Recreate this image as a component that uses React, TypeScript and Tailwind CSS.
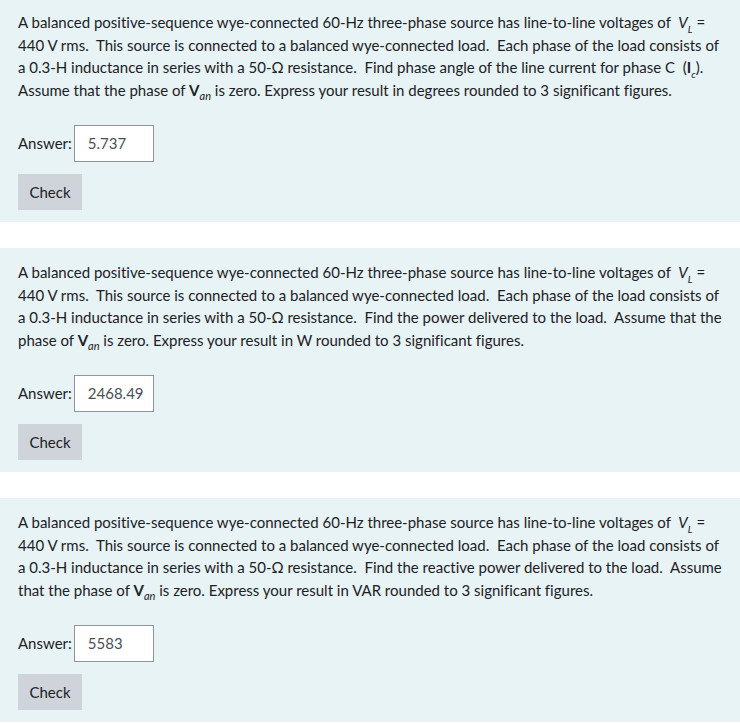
import React from 'react';

const Vl = () => (
  <span className="italic">
    V<sub className="text-[10px] leading-none align-[-2px]">L</sub>
  </span>
);

const Van = () => (
  <span>
    <b className="font-bold">V</b>
    <sub className="italic text-[11px] leading-none align-[-2px]">an</sub>
  </span>
);

const Ic = () => (
  <span>
    <b className="font-bold">I</b>
    <sub className="italic text-[10px] leading-none align-[-2px]">c</sub>
  </span>
);

type Q = { lines: React.ReactNode[]; answer: string };

const questions: Q[] = [
  {
    lines: [
      <>A balanced positive-sequence wye-connected 60-Hz three-phase source has line-to-line voltages of&nbsp; <Vl /> =</>,
      <>440 V rms.&nbsp; This source is connected to a balanced wye-connected load.&nbsp; Each phase of the load consists of</>,
      <>a 0.3-H inductance in series with a 50-Ω resistance.&nbsp; Find phase angle of the line current for phase C&nbsp; (<Ic />).</>,
      <>Assume that the phase of <Van /> is zero. Express your result in degrees rounded to 3 significant figures.</>,
    ],
    answer: '5.737',
  },
  {
    lines: [
      <>A balanced positive-sequence wye-connected 60-Hz three-phase source has line-to-line voltages of&nbsp; <Vl /> =</>,
      <>440 V rms.&nbsp; This source is connected to a balanced wye-connected load.&nbsp; Each phase of the load consists of</>,
      <>a 0.3-H inductance in series with a 50-Ω resistance.&nbsp; Find the power delivered to the load.&nbsp; Assume that the</>,
      <>phase of <Van /> is zero. Express your result in W rounded to 3 significant figures.</>,
    ],
    answer: '2468.49',
  },
  {
    lines: [
      <>A balanced positive-sequence wye-connected 60-Hz three-phase source has line-to-line voltages of&nbsp; <Vl /> =</>,
      <>440 V rms.&nbsp; This source is connected to a balanced wye-connected load.&nbsp; Each phase of the load consists of</>,
      <>a 0.3-H inductance in series with a 50-Ω resistance.&nbsp; Find the reactive power delivered to the load.&nbsp; Assume</>,
      <>that the phase of <Van /> is zero. Express your result in VAR rounded to 3 significant figures.</>,
    ],
    answer: '5583',
  },
];

const Question = ({ q }: { q: Q }) => (
  <div className="bg-[#e7f3f5] h-[224px] px-[18px] pt-[13px] pb-[12px] flex flex-col items-start">
    <div className="leading-[22.5px]">
      {q.lines.map((l, i) => (
        <div key={i} className="whitespace-nowrap">{l}</div>
      ))}
    </div>
    <div className="mt-[24px] flex items-center gap-[2px]">
      <span>Answer:</span>
      <div className="w-[80px] h-[37px] bg-white border border-[#8f959e] flex items-center pl-[13px] text-[#495057]">
        {q.answer}
      </div>
    </div>
    <button className="mt-[12px] h-[36px] w-[64px] bg-[#ced4da] text-[#1d2125] flex items-center justify-center">
      Check
    </button>
  </div>
);

export default function App() {
  return (
    <div
      className="bg-white w-[740px] h-[723px] overflow-hidden text-[#1d2125] text-[15px] [font-variant-ligatures:none]"
      style={{ fontFamily: '"Segoe UI", Lato, "Open Sans", sans-serif' }}
    >
      <div className="-mt-[2px] flex flex-col gap-[26px]">
        {questions.map((q, i) => (
          <Question key={i} q={q} />
        ))}
      </div>
    </div>
  );
}
